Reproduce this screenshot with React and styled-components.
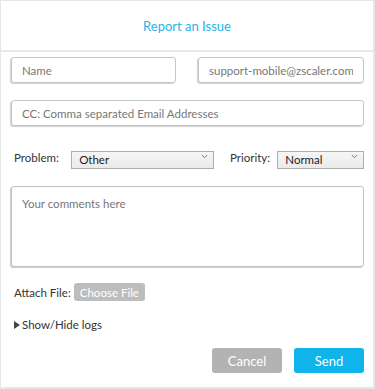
import React from 'react';
import styled, { createGlobalStyle } from 'styled-components';

const GlobalStyle = createGlobalStyle`
  html, body {
    margin: 0;
    padding: 0;
    background: #ffffff;
  }
  body {
    font-family: Lato, "Open Sans", sans-serif;
  }
`;

const font = `Lato, "Open Sans", sans-serif`;

function Chevron() {
  return (
    <svg width="7" height="5" viewBox="0 0 7 5">
      <path d="M0.8 1 L3.5 3.7 L6.2 1" fill="none" stroke="#777" strokeWidth="1" />
    </svg>
  );
}

function Dropdown({ width, value, options }) {
  return (
    <SelectWrap $width={width}>
      <Select defaultValue={value}>
        {options.map((o) => (
          <option key={o}>{o}</option>
        ))}
      </Select>
      <ChevronSlot>
        <Chevron />
      </ChevronSlot>
    </SelectWrap>
  );
}

function App() {
  return (
    <>
      <GlobalStyle />
      <Frame>
        <Header>
          <Title>Report an Issue</Title>
        </Header>
        <Form>
          <Row $gap={22} $bottom={17}>
            <TextInput $width={165} placeholder="Name" />
            <TextInput $width={167} $center placeholder="support-mobile@zscaler.com" />
          </Row>
          <TextInput placeholder="CC: Comma separated Email Addresses" />
          <Row $gap={0} $top={22}>
            <Label $width={58}>Problem:</Label>
            <Dropdown width={145} value="Other" options={['Other', 'Login', 'Network']} />
            <Label $width={48} $left={13}>Priority:</Label>
            <Dropdown width={88} value="Normal" options={['Low', 'Normal', 'High']} />
          </Row>
          <Comments placeholder="Your comments here" />
          <Row $gap={3} $top={16}>
            <Label>Attach File:</Label>
            <FileButton type="button">Choose File</FileButton>
          </Row>
          <Toggle>
            <Triangle />
            Show/Hide logs
          </Toggle>
          <Actions>
            <ActionButton type="button" $color="#b3b3b3">Cancel</ActionButton>
            <ActionButton type="button" $color="#0fb4ea">Send</ActionButton>
          </Actions>
        </Form>
      </Frame>
    </>
  );
}

const Frame = styled.div`
  width: 375px;
  height: 389px;
  box-sizing: border-box;
  border: 1px solid #e6e6e6;
  border-right-width: 2px;
  border-bottom-width: 2px;
  display: flex;
  flex-direction: column;
  background: #fff;
`;

const Header = styled.div`
  height: 49px;
  border-bottom: 2px solid #e8e8e8;
  display: flex;
  align-items: center;
  justify-content: center;
`;

const Title = styled.div`
  color: #2cb2e6;
  font-size: 13px;
  margin-top: 1px;
`;

const Form = styled.div`
  display: flex;
  flex-direction: column;
  padding: 5px 9px 0 10px;
`;

const Row = styled.div`
  display: flex;
  align-items: center;
  gap: ${(p) => p.$gap}px;
  margin-top: ${(p) => p.$top || 0}px;
  margin-bottom: ${(p) => p.$bottom || 0}px;
`;

const TextInput = styled.input`
  box-sizing: border-box;
  width: ${(p) => (p.$width ? `${p.$width}px` : '100%')};
  height: 26px;
  border: 1px solid #c6c6c6;
  border-radius: 3px;
  box-shadow: -1px 1px 1px rgba(0, 0, 0, 0.18);
  padding: 0 10px;
  font-family: ${font};
  font-size: 11.5px;
  color: #333;
  text-align: ${(p) => (p.$center ? 'center' : 'left')};
  outline: none;
  &::placeholder {
    color: #777;
  }
`;

const Label = styled.span`
  display: inline-block;
  width: ${(p) => (p.$width ? `${p.$width}px` : 'auto')};
  margin-left: ${(p) => (p.$left || 0) + 3}px;
  font-size: 11.5px;
  color: #333;
  white-space: nowrap;
`;

const SelectWrap = styled.div`
  position: relative;
  width: ${(p) => p.$width}px;
  height: 18px;
`;

const Select = styled.select`
  appearance: none;
  box-sizing: border-box;
  width: 100%;
  height: 100%;
  border: 1px solid #adadad;
  border-radius: 0;
  background: linear-gradient(#f6f6f6, #eaeaea);
  padding: 0 0 0 7px;
  font-family: ${font};
  font-size: 11.5px;
  color: #222;
  outline: none;
`;

const ChevronSlot = styled.span`
  position: absolute;
  right: 6px;
  top: 6px;
  display: flex;
  pointer-events: none;
`;

const Comments = styled.textarea`
  box-sizing: border-box;
  width: 100%;
  height: 81px;
  margin-top: 20px;
  border: 1px solid #c2c2c2;
  border-radius: 3px;
  box-shadow: -1px 1px 1px rgba(0, 0, 0, 0.2);
  padding: 10px 10px;
  resize: none;
  font-family: ${font};
  font-size: 11.5px;
  outline: none;
  &::placeholder {
    color: #777;
  }
`;

const FileButton = styled.button`
  height: 18px;
  padding: 0 6px;
  border: none;
  border-radius: 3px;
  background: #bdbdbd;
  color: #fff;
  font-family: ${font};
  font-size: 11.5px;
`;

const Toggle = styled.div`
  display: flex;
  align-items: center;
  gap: 2px;
  margin: 17px 0 0 3px;
  font-size: 11.5px;
  color: #333;
`;

const Triangle = styled.span`
  width: 0;
  height: 0;
  border-top: 4px solid transparent;
  border-bottom: 4px solid transparent;
  border-left: 6px solid #444;
`;

const Actions = styled.div`
  display: flex;
  justify-content: flex-end;
  gap: 12px;
  margin-top: 17px;
`;

const ActionButton = styled.button`
  width: 70px;
  height: 25px;
  border: none;
  border-radius: 3px;
  background: ${(p) => p.$color};
  color: #fff;
  font-family: ${font};
  font-size: 13px;
`;

export default App;
